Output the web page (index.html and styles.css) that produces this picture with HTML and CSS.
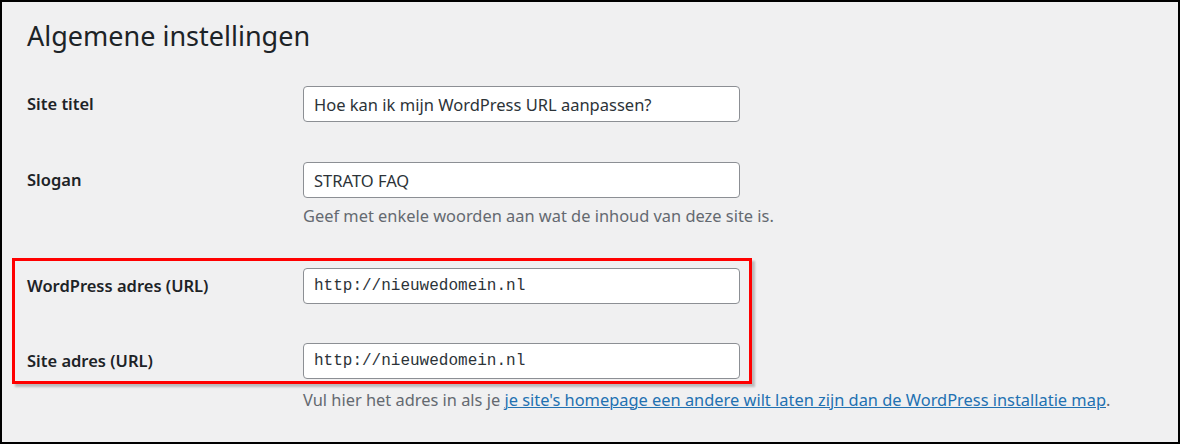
FILE: index.html
```html
<!DOCTYPE html>
<html lang="nl">
<head>
<meta charset="utf-8">
<title>Algemene instellingen</title>
<link rel="stylesheet" href="styles.css">
</head>
<body>
<div class="frame">
  <h1 class="title">Algemene instellingen</h1>
  <div class="row">
    <label class="label" for="blogname">Site titel</label>
    <div class="field">
      <input class="input" id="blogname" type="text" value="Hoe kan ik mijn WordPress URL aanpassen?">
    </div>
  </div>
  <div class="row">
    <label class="label" for="blogdescription">Slogan</label>
    <div class="field">
      <input class="input" id="blogdescription" type="text" value="STRATO FAQ">
      <p class="desc">Geef met enkele woorden aan wat de inhoud van deze site is.</p>
    </div>
  </div>
  <div class="highlight">
    <div class="row row-url">
      <label class="label" for="siteurl">WordPress adres (URL)</label>
      <div class="field">
        <input class="input code" id="siteurl" type="text" value="http://nieuwedomein.nl">
      </div>
    </div>
    <div class="row row-url row-url-last">
      <label class="label" for="home">Site adres (URL)</label>
      <div class="field">
        <input class="input code" id="home" type="text" value="http://nieuwedomein.nl">
      </div>
    </div>
  </div>
  <p class="desc desc-after">Vul hier het adres in als je <a href="#" class="link">je site's homepage een andere wilt laten zijn dan de WordPress installatie map</a>.</p>
</div>
</body>
</html>
```

FILE: styles.css
```css
html, body {
  margin: 0;
  padding: 0;
}

body {
  width: 1180px;
  height: 444px;
  overflow: hidden;
  font-family: "Noto Sans", "Open Sans", sans-serif;
  color: #1d2327;
}

.frame {
  box-sizing: border-box;
  width: 1180px;
  height: 444px;
  border: 2px solid #000;
  background: #f0f0f1;
  padding: 0 0 0 25px;
}

.title {
  margin: 0;
  padding-top: 15px;
  height: 49px;
  font-size: 27px;
  line-height: 38px;
  font-weight: 400;
  color: #1d2327;
}

.row {
  display: grid;
  grid-template-columns: 276px 437px;
  padding: 20px 0;
}

.label {
  height: 36px;
  line-height: 36px;
  font-size: 16.5px;
  font-weight: 600;
  color: #1d2327;
  white-space: nowrap;
}

.field {
  display: flex;
  flex-direction: column;
}

.input {
  box-sizing: border-box;
  width: 437px;
  height: 36px;
  margin: 0;
  padding: 0 10px;
  border: 1px solid #8c8f94;
  border-radius: 4px;
  background: #fff;
  font-family: "Noto Sans", "Open Sans", sans-serif;
  font-size: 16.5px;
  color: #2c3338;
}

.input.code {
  font-family: "Liberation Mono", "DejaVu Sans Mono", monospace;
  font-size: 16px;
}

.desc {
  margin: 6px 0 0;
  font-size: 16.4px;
  line-height: 24px;
  color: #646970;
  white-space: nowrap;
}

.highlight {
  width: fit-content;
  margin: 10px 0 0 -15px;
  padding: 7px 9px 2px 12px;
  border: 3px solid #ff0000;
  box-shadow: 3px 3px 2px rgba(0, 0, 0, 0.22);
}

.row-url {
  padding: 0;
}

.row-url-last {
  padding-top: 39px;
}

.desc-after {
  margin: 4px 0 0 276px;
}

.link {
  color: #2271b1;
  text-decoration: underline;
  text-decoration-thickness: 1px;
}
```
